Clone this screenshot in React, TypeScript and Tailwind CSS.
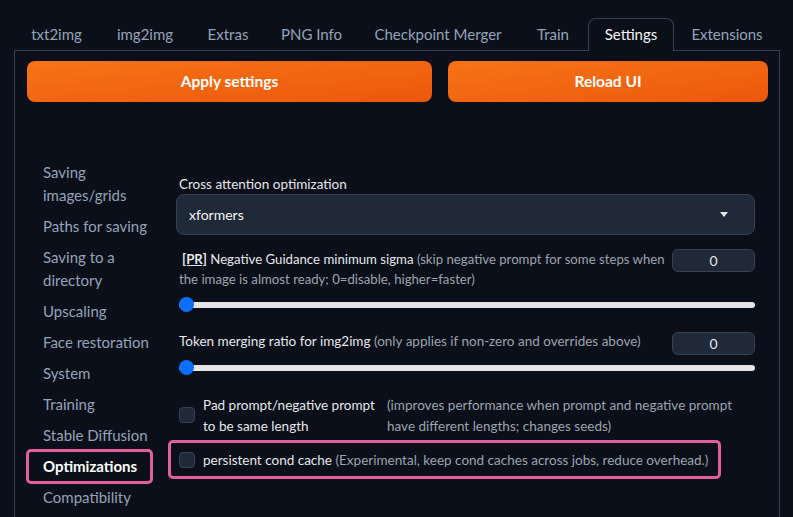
import React from "react";

const tabs = [
  { name: "txt2img", w: "w-[85px]" },
  { name: "img2img", w: "w-[92px]" },
  { name: "Extras", w: "w-[74px]" },
  { name: "PNG Info", w: "w-[93px]" },
  { name: "Checkpoint Merger", w: "w-[160px]" },
  { name: "Train", w: "w-[70px]" },
  { name: "Settings", w: "w-[86px]", active: true },
  { name: "Extensions", w: "w-[106px]" },
];

const sections = [
  "Saving images/grids",
  "Paths for saving",
  "Saving to a directory",
  "Upscaling",
  "Face restoration",
  "System",
  "Training",
  "Stable Diffusion",
  "Optimizations",
  "Compatibility",
];

function Slider() {
  return (
    <div className="relative flex h-[15px] items-center pl-[3px]">
      <div className="h-[6px] w-full rounded-full bg-[#e5e5e5]" />
      <div className="absolute left-[3px] top-0 h-[15px] w-[15px] rounded-full bg-[#0b6efd]" />
    </div>
  );
}

function NumberBox() {
  return (
    <div className="flex h-[23px] w-[83px] shrink-0 items-center justify-center rounded-[6px] border border-[#374151] bg-[#1f2937] text-[14px] text-[#e5e7eb]">
      0
    </div>
  );
}

function Checkbox() {
  return <div className="h-[16px] w-[16px] shrink-0 rounded-[4px] border border-[#374151] bg-[#1f2937]" />;
}

export default function App() {
  return (
    <div className="h-[517px] w-[793px] overflow-hidden bg-[#0b0f19] pl-[14px] pr-[13px] pt-[18px] font-['Lato',sans-serif]">
      {/* tabs */}
      <div className="flex h-[32px] items-end">
        {tabs.map((t) =>
          t.active ? (
            <div
              key={t.name}
              className={`${t.w} relative z-10 -mb-px flex h-[33px] items-center justify-center rounded-t-[8px] border border-b-0 border-[#374151] bg-[#0b0f19] pb-px text-[15px] text-[#f3f4f6]`}
            >
              {t.name}
            </div>
          ) : (
            <div key={t.name} className={`${t.w} flex h-[32px] items-center justify-center text-[15px] text-[#94a3b8]`}>
              {t.name}
            </div>
          )
        )}
      </div>

      {/* panel */}
      <div className="h-[600px] border border-b-0 border-[#374151] pl-[12px] pr-[11px] pt-[10px]">
        <div className="flex gap-4">
          <button className="h-[41px] w-[405px] rounded-[8px] bg-gradient-to-br from-[#f97316] to-[#ea580c] text-[15.5px] font-bold text-white">
            Apply settings
          </button>
          <button className="h-[41px] flex-1 rounded-[8px] bg-gradient-to-br from-[#f97316] to-[#ea580c] text-[15.5px] font-bold text-white">
            Reload UI
          </button>
        </div>

        <div className="mt-[55px] flex">
          {/* sidebar */}
          <div className="w-[149px] shrink-0 pl-[16px]">
            {sections.map((s) => (
              <div
                key={s}
                className={`relative w-[116px] py-[4px] text-[15px] leading-[23px] ${
                  s === "Optimizations" ? "font-bold text-white" : "text-[#94a3b8]"
                }`}
              >
                {s}
                {s === "Optimizations" && (
                  <div className="absolute -left-[17px] -top-[2px] -bottom-[2px] w-[127px] rounded-[5px] border-[3px] border-[#e0609e]" />
                )}
              </div>
            ))}
          </div>

          {/* content */}
          <div className="w-[579px] pt-[17px] text-[13.5px]">
            <div className="pl-[3px] leading-[20px] text-[#e5e7eb]">Cross attention optimization</div>
            <div className="flex h-[41px] items-center justify-between rounded-[8px] border border-[#374151] bg-[#1f2937] pl-[12px] pr-[26px] text-[14px] text-[#f3f4f6]">
              <span>xformers</span>
              <svg width="8" height="5" viewBox="0 0 8 5">
                <path d="M0 0H8L4 5Z" fill="#e5e7eb" />
              </svg>
            </div>

            <div className="mt-[14px] flex">
              <div className="min-w-0 flex-1 whitespace-nowrap pl-[3px] text-[13.2px] leading-[20px] text-[#e5e7eb]">
                <span className="ml-[3px] font-bold underline">[PR]</span> Negative Guidance minimum sigma{" "}
                <span className="text-[#9ca3af]">
                  (skip negative prompt for some steps when
                  <br />
                  the image is almost ready; 0=disable, higher=faster)
                </span>
              </div>
              <NumberBox />
            </div>
            <div className="mt-[8px]">
              <Slider />
            </div>

            <div className="mt-[19px] flex gap-[3px]">
              <div className="flex-1 pl-[3px] leading-[20px] text-[#e5e7eb]">
                Token merging ratio for img2img{" "}
                <span className="text-[#9ca3af]">(only applies if non-zero and overrides above)</span>
              </div>
              <div className="mt-px">
                <NumberBox />
              </div>
            </div>
            <div className="mt-[5px]">
              <Slider />
            </div>

            <div className="mt-[20px] flex pl-[3px] leading-[21px]">
              <div className="mt-[12px]">
                <Checkbox />
              </div>
              <div className="ml-[8px] w-[176px] whitespace-nowrap text-[#e5e7eb]">
                Pad prompt/negative prompt
                <br />
                to be same length
              </div>
              <div className="ml-[8px] whitespace-nowrap text-[#9ca3af]">
                (improves performance when prompt and negative prompt
                <br />
                have different lengths; changes seeds)
              </div>
            </div>

            <div className="relative mt-[15px] flex h-[16px] items-center pl-[3px]">
              <Checkbox />
              <div className="ml-[8px] whitespace-nowrap text-[#e5e7eb]">
                persistent cond cache{" "}
                <span className="text-[#9ca3af]">(Experimental, keep cond caches across jobs, reduce overhead.)</span>
              </div>
              <div className="absolute -left-[8px] -top-[12px] h-[39px] w-[553px] rounded-[5px] border-[3px] border-[#e0609e]" />
            </div>
          </div>
        </div>
      </div>
    </div>
  );
}
